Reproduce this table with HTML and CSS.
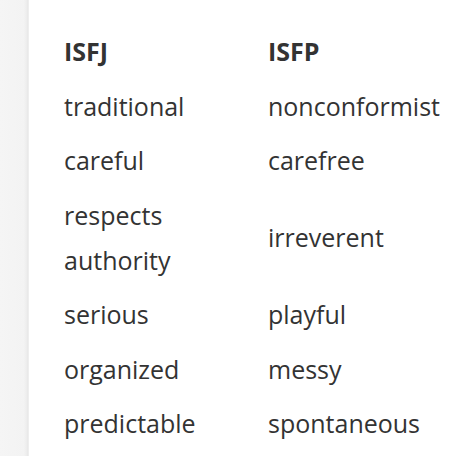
FILE: index.html
```html
<!DOCTYPE html>
<html>
<head>
<meta charset="utf-8">
<link rel="stylesheet" href="styles.css">
</head>
<body>
<div class="page">
  <div class="sidebar"></div>
  <div class="content">
    <table class="compare">
      <thead>
        <tr><th class="c1">ISFJ</th><th class="c2">ISFP</th></tr>
      </thead>
      <tbody>
        <tr><td class="c1">traditional</td><td class="c2">nonconformist</td></tr>
        <tr><td class="c1">careful</td><td class="c2">carefree</td></tr>
        <tr><td class="c1">respects<br>authority</td><td class="c2">irreverent</td></tr>
        <tr><td class="c1">serious</td><td class="c2">playful</td></tr>
        <tr><td class="c1">organized</td><td class="c2">messy</td></tr>
        <tr><td class="c1">predictable</td><td class="c2">spontaneous</td></tr>
      </tbody>
    </table>
  </div>
</div>
</body>
</html>
```
FILE: styles.css
```css
html, body {
  margin: 0;
  padding: 0;
  background: #ffffff;
}
.page {
  display: flex;
  width: 474px;
  height: 456px;
  overflow: hidden;
}
.sidebar {
  width: 29px;
  flex: none;
  background: linear-gradient(to right, #f5f5f5 0, #f3f3f3 24px, #ececec 27px, #e6e6e6 28px, #f6f6f6 29px);
}
.content {
  padding: 29px 0 0 35px;
  font-family: "Open Sans", sans-serif;
  color: #333333;
}
.compare {
  border-collapse: collapse;
  font-size: 25px;
  line-height: 45px;
}
.compare th, .compare td {
  padding: 4.75px 0;
  text-align: left;
  vertical-align: middle;
}
.compare th {
  font-weight: 700;
  padding-top: 0;
}
.c1 {
  width: 204px;
}
```
